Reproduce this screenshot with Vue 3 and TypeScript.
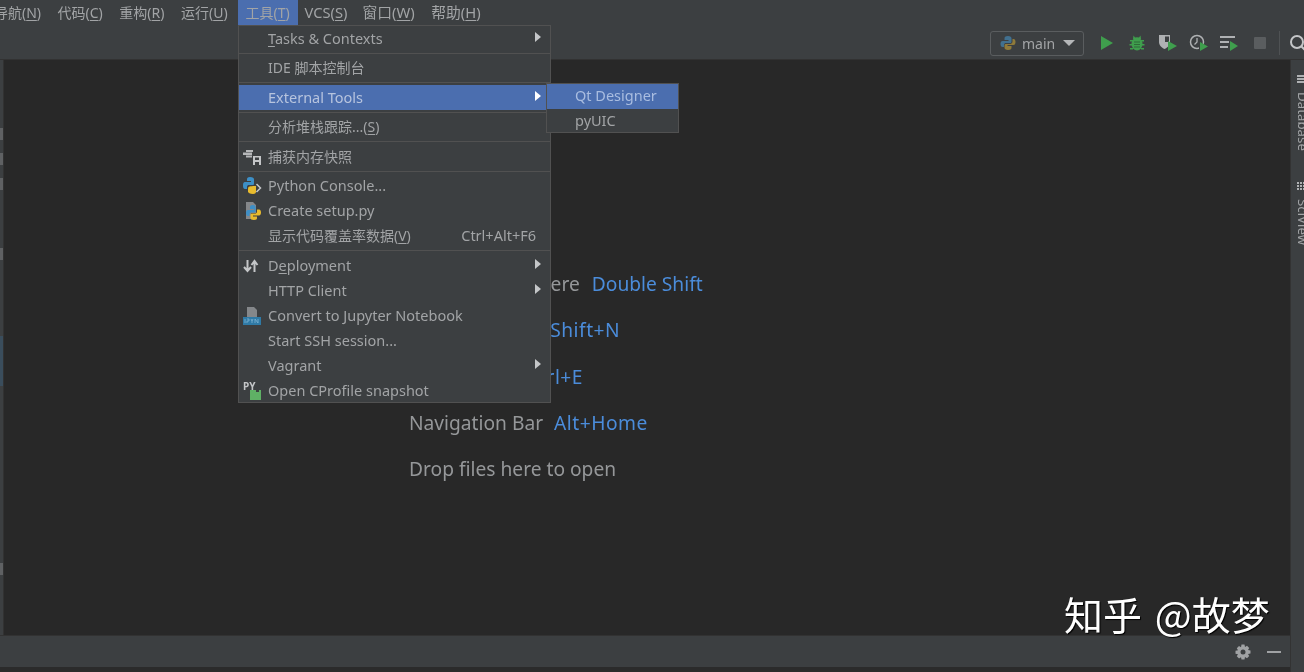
<script setup lang="ts">
interface MenuRow { label?: string; ul?: string; after?: string; icon?: string; sub?: boolean; hot?: boolean; key?: string; sep?: boolean }
const rows: MenuRow[] = [
  { label: '', ul: 'T', after: 'asks & Contexts', sub: true },
  { sep: true },
  { label: 'IDE 脚本控制台' },
  { sep: true },
  { label: 'External Tools', sub: true, hot: true },
  { sep: true },
  { label: '分析堆栈跟踪...(', ul: 'S', after: ')' },
  { sep: true },
  { label: '捕获内存快照', icon: 'snap' },
  { sep: true },
  { label: 'Python Console...', icon: 'py' },
  { label: 'Create setup.py', icon: 'setup' },
  { label: '显示代码覆盖率数据(', ul: 'V', after: ')', key: 'Ctrl+Alt+F6' },
  { sep: true },
  { label: 'D', ul: 'e', after: 'ployment', icon: 'deploy', sub: true },
  { label: 'HTTP Client', sub: true },
  { label: 'Convert to Jupyter Notebook', icon: 'ipynb' },
  { label: 'Start SSH session...' },
  { label: 'Vagrant', sub: true },
  { label: 'Open CProfile snapshot', icon: 'prof' }
]
const isCjk = (s?: string) => /[\u4e00-\u9fff]/.test(s ?? '')
const bar = [
  ['导航(', 'N', ')'], ['代码(', 'C', ')'], ['重构(', 'R', ')'], ['运行(', 'U', ')'],
  ['工具(', 'T', ')'], ['VCS(', 'S', ')'], ['窗口(', 'W', ')'], ['帮助(', 'H', ')']
]
const hints = [
  ['Search Everywhere', 'Double Shift'],
  ['Go to File', 'Ctrl+Shift+N'],
  ['Recent Files', 'Ctrl+E'],
  ['Navigation Bar', 'Alt+Home'],
  ['Drop files here to open', '']
]
</script>

<template>
  <div class="app">
    <nav class="menubar">
      <span v-for="(b, i) in bar" :key="i" class="mi" :class="{ on: i === 4, vcs: i === 5, wide: i > 5 }">{{ b[0] }}<u>{{ b[1] }}</u>{{ b[2] }}</span>
    </nav>

    <header class="toolbar">
      <div class="combo">
        <svg width="18" height="18" viewBox="0 0 18 18"><path d="M9 2C6 2 5.500 3 5.500 4.500V6H9.500V7H3.500C2 7 1.500 8.500 1.500 10S2 13 3.500 13H5V11C5 9.500 6 9 7 9H11C12 9 12.500 8.500 12.500 7.500V4.500C12.500 3 11.500 2 9 2Z" fill="#41708f"/><path d="M9 16C12 16 12.500 15 12.500 13.500V12H8.500V11H14.500C16 11 16.500 9.500 16.500 8S16 5 14.500 5H13.500V7.500C13.500 9 12.500 10 11 10H7C6 10 5.500 10.500 5.500 11.500V13.500C5.500 15 6.500 16 9 16Z" fill="#8f7a3a"/></svg>
        <span class="main">main</span>
        <span class="caret"></span>
      </div>
      <span class="tb"><svg width="16" height="18" viewBox="0 0 16 18"><path d="M2 2L14 9L2 16Z" fill="#3f9e4d"/></svg></span>
      <span class="tb"><svg width="18" height="18" viewBox="0 0 18 18"><g fill="#3f9e4d"><ellipse cx="9" cy="10" rx="5.500" ry="6.500"/><path d="M5.500 1.500L7 3.500H11L12.500 1.500L13 5H5Z"/><path d="M2 6h3v1.500H2zM13 6h3v1.500h-3zM1.500 10h3v1.500h-3zM13.500 10h3v1.500h-3zM2 14h3v1.500H2zM13 14h3v1.500h-3z"/></g><path d="M6 8h6M6 10.500h6M6 13h6" stroke="#2f6b3a" stroke-width="1"/></svg></span>
      <span class="tb"><svg width="22" height="20" viewBox="0 0 22 20"><path d="M2 2H13V9C13 12.500 10.500 14.500 7.500 16C4.500 14.500 2 12.500 2 9Z" fill="#afb1b3"/><path d="M8 3.500H12V9H8Z" fill="#3c3f41"/><path d="M11 8L20 13L11 18Z" fill="#3f9e4d"/></svg></span>
      <span class="tb"><svg width="22" height="20" viewBox="0 0 22 20"><circle cx="9" cy="9" r="6.500" fill="none" stroke="#afb1b3" stroke-width="1.500"/><path d="M9 5V9L6.500 11.500" fill="none" stroke="#afb1b3" stroke-width="1.300"/><path d="M11 8.500L20 13.500L11 18.500Z" fill="#3c3f41"/><path d="M12 9L20 13.500L12 18Z" fill="#3f9e4d"/></svg></span>
      <span class="tb"><svg width="22" height="20" viewBox="0 0 22 20"><path d="M2 3H17V5H2ZM2 8H11V10H2ZM2 13H10V15H2Z" fill="#afb1b3"/><path d="M12 8L20 13L12 18Z" fill="#3f9e4d"/></svg></span>
      <span class="tb"><span class="stop"></span></span>
      <span class="vsep"></span>
      <svg class="search" width="18" height="18" viewBox="0 0 18 18"><circle cx="8" cy="8" r="6" fill="none" stroke="#c4c6c8" stroke-width="2"/><path d="M12.500 12.500L17 17" stroke="#c4c6c8" stroke-width="2"/></svg>
    </header>

    <div class="middle">
      <aside class="leftstrip">
        <i class="mark m1"></i><i class="mark m2"></i><i class="mark m3"></i><i class="mark m4"></i>
        <i class="mark blue"></i><i class="mark m5"></i>
      </aside>
      <main class="editor">
        <p v-for="h in hints" :key="h[0]" class="hint">{{ h[0] }}<span v-if="h[1]" class="sc" :class="{ plus: h[1].includes('+') }">{{ h[1] }}</span></p>
      </main>
      <aside class="rightstrip">
        <div class="tool first">
          <svg width="10" height="10" viewBox="0 0 10 10"><path d="M1 1h8v2H1zM1 4h8v2H1zM1 7h8v2H1z" fill="#afb1b3"/></svg>
          <span class="vt">Database</span>
        </div>
        <div class="tool second">
          <svg width="10" height="10" viewBox="0 0 10 10"><path d="M1 1h2v2H1zM4 1h2v2H4zM7 1h2v2H7zM1 4h2v2H1zM4 4h2v2H4zM7 4h2v2H7zM1 7h2v2H1zM4 7h2v2H4zM7 7h2v2H7z" fill="#afb1b3"/></svg>
          <span class="vt">SciView</span>
        </div>
      </aside>
      <div class="bottombar">
        <svg width="18" height="18" viewBox="0 0 18 18"><g fill="#a0a2a4"><path d="M7.500 1.500h3l.5 2.500 2-1.200 2.200 2.200-1.200 2 2.500.5v3l-2.500.5 1.200 2-2.200 2.200-2-1.200-.5 2.500h-3L7 14.300l-2 1.200-2.200-2.200 1.200-2-2.500-.5v-3L4 7.300l-1.200-2L5 3.100l2 1.200z"/></g><circle cx="9" cy="9" r="2.500" fill="#3c3f41"/></svg>
        <span class="minus"></span>
      </div>
      <div class="statusbar"></div>
    </div>

    <div class="popup">
      <template v-for="(r, i) in rows" :key="i">
        <div v-if="r.sep" class="sep"></div>
        <div v-else class="row" :class="{ hot: r.hot, latin: !isCjk(r.label) }">
          <span class="ic">
            <svg v-if="r.icon === 'snap'" width="20" height="20" viewBox="0 0 20 20"><path d="M4 3h7v2H4zM1 5.500h9v2.500H1zM4 8.500h6v2H4z" fill="#b5b7b9"/><path d="M11 9h8v9h-8z" fill="#c4c6c8"/><path d="M13 10.500h4v2.500h-4zM13 15h4v3h-4z" fill="#3c3f41"/></svg>
            <svg v-else-if="r.icon === 'py' || r.icon === 'setup'" width="20" height="20" viewBox="0 0 20 20">
              <path v-if="r.icon === 'setup'" d="M4 1h7l3 3v8H4zM4 12h5v6H4z" fill="#84878a"/>
              <path v-if="r.icon === 'py'" d="M8 1C5.500 1 5 2 5 3.500V5H9V6H3C1.500 6 1 7.500 1 9.500S1.500 13 3 13H5V11C5 9.500 6 9 7 9H10.500C11.500 9 12 8.500 12 7.500V3.500C12 2 11 1 8 1Z" fill="#3d8fc6"/>
              <path v-if="r.icon === 'py'" d="M11 18C13.500 18 14 17 14 15.500V10H13C13 10 7 10 6.500 11S6 13 6 13.500V15.500C6 17 8 18 11 18Z" fill="#e8bb2e"/>
              <path v-if="r.icon === 'py'" d="M14.500 8L18.500 12L14.500 16" fill="none" stroke="#c4c6c8" stroke-width="1.500"/>
              <path v-if="r.icon === 'setup'" d="M11 4C8.500 4 8 5 8 6V8H12V9H6C4.500 9 4 10.500 4 12S4.500 15 6 15H7.500V13C7.500 12 8.500 11.500 9.500 11.500H12C13 11.500 13.500 11 13.500 10V6C13.500 5 13 4 11 4Z" fill="#3d8fc6"/>
              <path v-if="r.icon === 'setup'" d="M12 19C14.500 19 15 18 15 17V15.500H11V14.500H17C18.500 14.500 19 13 19 11.500S18.500 8.500 17 8.500H15V10.500C15 12 14 12.500 13 12.500H10C9 12.500 8.500 13 8.500 14V17C8.500 18 9.500 19 12 19Z" fill="#e8bb2e"/>
            </svg>
            <svg v-else-if="r.icon === 'deploy'" width="18" height="18" viewBox="0 0 18 18"><path d="M5.500 3V13M2 10L5.500 14L9 10M12.500 15V5M9.500 8L12.500 4L15.500 8" fill="none" stroke="#c4c6c8" stroke-width="2"/></svg>
            <svg v-else-if="r.icon === 'ipynb'" width="20" height="20" viewBox="0 0 20 20"><path d="M5 1h7l3 3v7H5z" fill="#84878a"/><path d="M1 11h18v8H1z" fill="#2f7aa6"/><path d="M3 13v4M5 13h2v2H5v2M9 13l1 2 1-2M10 15v2M13 17v-4l3 4v-4" fill="none" stroke="#7fb4d4" stroke-width="0.800"/></svg>
            <svg v-else-if="r.icon === 'prof'" width="20" height="20" viewBox="0 0 20 20"><path d="M8 9h11v10H8z" fill="#5fb065"/><path d="M14 9h3v2h-3z" fill="#3c3f41"/></svg>
            <span v-if="r.icon === 'prof'" class="pylab">PY</span>
          </span>
          <span class="lbl">{{ r.label }}<u v-if="r.ul">{{ r.ul }}</u>{{ r.after }}</span>
          <span v-if="r.key" class="key">{{ r.key }}</span>
          <span v-if="r.sub" class="arrow"></span>
        </div>
      </template>
    </div>

    <div class="submenu">
      <div class="subrow hot">Qt Designer</div>
      <div class="subrow">pyUIC</div>
    </div>

    <div class="mark-zh">知乎 @故梦</div>
  </div>
</template>

<style scoped>
.app {
  width: 1304px;
  height: 672px;
  overflow: hidden;
  position: relative;
  display: flex;
  flex-direction: column;
  background: #3c3f41;
  color: #a2a4a6;
  font-family: "Noto Sans", "Noto Sans CJK SC", sans-serif;
  filter: blur(0.35px);
}
u { text-underline-offset: 2px; text-decoration-thickness: 1px; }
.menubar {
  height: 25px;
  display: flex;
  align-items: center;
  flex: none;
  margin-left: -14px;
  font-size: 14px;
  background: #3c3f41;
}
.mi { height: 25px; line-height: 25px; padding: 0 8px; margin-right: 0.5px; white-space: nowrap; }
.mi.on { background: #4b6eaf; width: 60px; box-sizing: border-box; margin: 0 -1px 0 1.500px; }
.mi.vcs { font-size: 14.700px; margin-right: -1px; }
.mi.wide { font-size: 14.800px; }
.toolbar {
  height: 35px;
  flex: none;
  display: flex;
  align-items: center;
  justify-content: flex-end;
  border-bottom: 1px solid #323232;
  box-sizing: border-box;
  padding-top: 2px;
}
.combo {
  width: 94px;
  height: 25px;
  box-sizing: border-box;
  border: 1px solid #5a5d5f;
  border-radius: 3px;
  display: flex;
  align-items: center;
  padding: 0 8px 0 8px;
  gap: 5px;
  margin-right: 7.500px;
  font-size: 14px;
}
.main { flex: 1; }
.caret { width: 0; height: 0; border-left: 6px solid transparent; border-right: 6px solid transparent; border-top: 6px solid #b5b7b9; }
.tb { width: 30.600px; height: 24px; flex: none; display: flex; align-items: center; justify-content: center; }
.stop { width: 12px; height: 12px; background: #5a5d5f; border-radius: 1px; }
.vsep { width: 1px; height: 24px; background: #4f5254; margin: 0 9px 0 4px; }
.search { margin-right: -3px; flex: none; }
.middle {
  flex: 1;
  display: grid;
  grid-template-columns: 3px 1fr 14px;
  grid-template-rows: 575px 32px 1fr;
  min-height: 0;
}
.leftstrip { grid-row: 1; grid-column: 1; background: #3c3f41; display: flex; flex-direction: column; overflow: hidden; }
.mark { display: block; width: 3px; height: 12px; background: #5f6163; flex: none; }
.m1 { margin-top: 68px; }
.m2 { margin-top: 13px; }
.m3 { margin-top: 13px; }
.m4 { margin-top: 58px; }
.blue { margin-top: 76px; height: 50px; background: #3a4d5c; }
.m5 { margin-top: 177px; }
.editor {
  grid-row: 1;
  grid-column: 2;
  background: #282828;
  padding: 210px 0 0 405px;
  margin: 0;
  box-sizing: border-box;
  border-left: 1px solid #323232;
}
.hint { margin: 0 0 18.250px; height: 28px; line-height: 28px; font-size: 19.200px; color: #959799; white-space: nowrap; }
.sc { color: #4b8cda; margin-left: 12px; }
.sc.plus { letter-spacing: 0.500px; margin-left: 11px; }
.rightstrip {
  grid-row: 1 / 4;
  grid-column: 3;
  background: #3c3f41;
  border-left: 1px solid #333;
  box-sizing: border-box;
  overflow: hidden;
  font-size: 13.300px;
}
.tool { display: flex; flex-direction: column; align-items: flex-start; padding-left: 5px; gap: 8px; width: 40px; }
.first { margin-top: 14px; }
.second { margin-top: 30px; }
.vt { writing-mode: vertical-rl; color: #a2a4a6; line-height: 14px; }
.bottombar {
  grid-row: 2;
  grid-column: 1 / 3;
  background: #3c3f41;
  display: flex;
  align-items: center;
  justify-content: flex-end;
  gap: 14px;
  padding-right: 9px;
  border-top: 1px solid #323232;
  box-sizing: border-box;
}
.bottombar svg { margin-right: 1px; }
.minus { width: 14px; height: 2px; background: #a0a2a4; }
.statusbar { grid-row: 3; grid-column: 1 / 3; background: #2b2b2b; }
.popup {
  position: absolute;
  left: 238px;
  top: 25px;
  width: 313px;
  height: 378px;
  box-sizing: border-box;
  background: #3c3f41;
  border: 1px solid #515151;
  font-size: 14px;
}
.row { height: 25px; display: flex; align-items: center; position: relative; }
.row.latin { font-size: 14.500px; }
.row.hot { background: #4b6eaf; color: #b7c4de; }
.sep { height: 1px; margin: 1.750px 0; background: #515151; }
.ic { width: 29px; height: 20px; flex: none; padding-left: 3px; box-sizing: border-box; position: relative; display: flex; align-items: center; }
.pylab { position: absolute; left: 4px; top: -1px; font-size: 10px; font-weight: 700; color: #c4c6c8; line-height: 12px; }
.lbl { flex: 1; white-space: nowrap; margin-top: -2px; }
.key { margin: -2px 14px 0 0; font-size: 14.500px; }
.arrow { position: absolute; right: 9px; top: 6px; width: 0; height: 0; border-top: 5px solid transparent; border-bottom: 5px solid transparent; border-left: 6px solid #c4c6c8; }
.hot .arrow { border-left-color: #fff; }
.submenu {
  position: absolute;
  left: 546px;
  top: 83px;
  width: 133px;
  height: 50px;
  background: #3c3f41;
  border: 1px solid #515151;
  box-sizing: border-box;
  font-size: 14.500px;
}
.subrow { height: 24.500px; line-height: 22px; padding-left: 28px; }
.subrow.hot { background: #4b6eaf; color: #a9bde0; }
.mark-zh {
  position: absolute;
  left: 1064px;
  top: 588px;
  font-family: "Noto Sans CJK SC", sans-serif;
  font-size: 39px;
  line-height: 50px;
  color: #fff;
  white-space: nowrap;
  word-spacing: 4px;
  text-shadow: 1px 1px 1px #000;
}
</style>
